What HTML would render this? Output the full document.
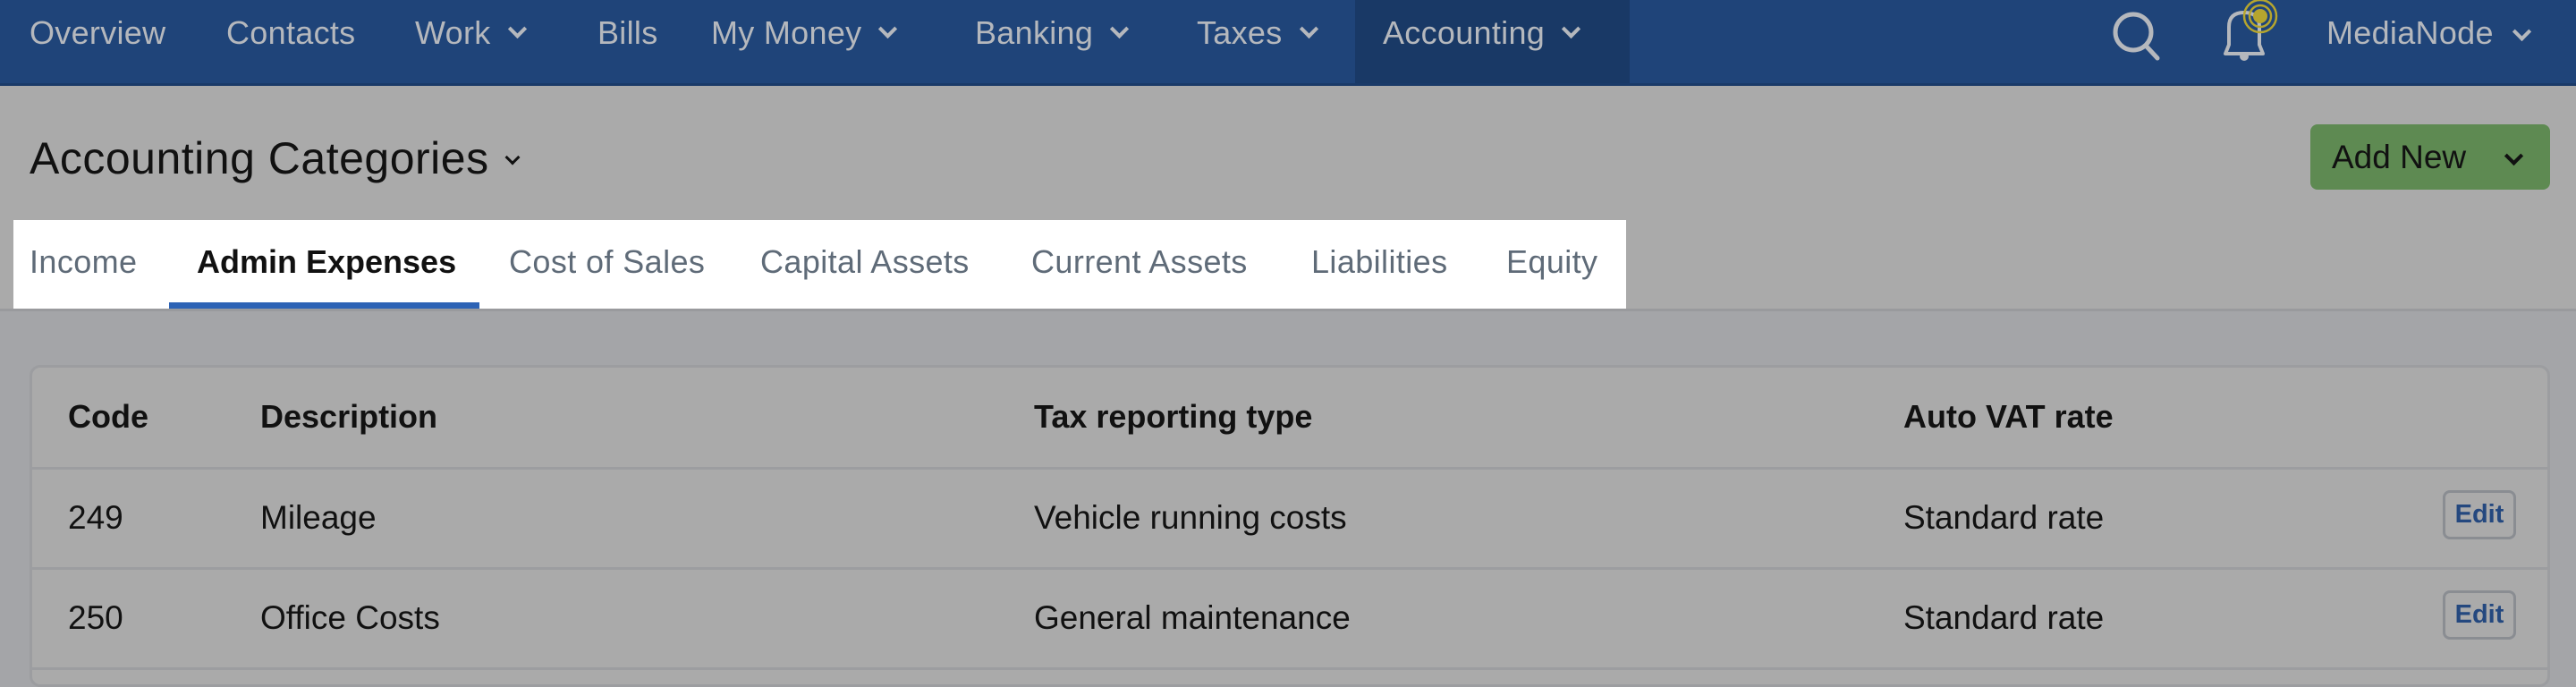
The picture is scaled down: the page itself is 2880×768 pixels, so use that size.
<!DOCTYPE html>
<html><head><meta charset="utf-8"><style>
*{margin:0;padding:0;box-sizing:border-box}
body{width:2880px;height:752px;overflow:hidden;background:#a4a5a8;font-family:"Liberation Sans",sans-serif;position:relative}
.nav{position:absolute;left:0;top:0;width:2880px;height:96px;background:#1f4479;border-bottom:3px solid #1a3a68}
.nav span{position:absolute;top:16px;font-size:36px;color:#b5b8bd;white-space:nowrap;letter-spacing:0.3px}
.act{position:absolute;left:1515px;top:0;width:307px;height:93px;background:#193966}
.chev{display:inline-block;width:15px;height:15px;border-right:4px solid #b5b8bd;border-bottom:4px solid #b5b8bd;transform:rotate(45deg);margin-left:22px;position:relative;top:-9px}
.top{position:absolute;left:0;top:96px;width:2880px;height:249px;background:#aaaaaa}
h1{position:absolute;left:33px;top:148px;font-size:50px;font-weight:normal;color:#111;white-space:nowrap;letter-spacing:0.5px}
.btn{position:absolute;left:2583px;top:139px;width:268px;height:73px;background:#5e8a52;border-radius:8px;font-size:37px;color:#111;padding:16px 0 0 24px;white-space:nowrap}
.tabs{position:absolute;left:15px;top:246px;width:1803px;height:99px;background:#fff}
.tabs span{position:absolute;top:26px;font-size:36px;color:#5f6b78;white-space:nowrap;letter-spacing:0.4px}
.line{position:absolute;left:0;top:345px;width:2880px;height:3px;background:#999a9d}
.card{position:absolute;left:33px;top:408px;width:2818px;height:360px;background:#aaa;border:3px solid #9c9da0;border-radius:12px}
.row{position:absolute;left:0;width:2812px;border-bottom:3px solid #9c9da0}
.row span{position:absolute;font-size:37px;color:#111;white-space:nowrap}
.edit{position:absolute;left:2695px;width:82px;height:55px;border:3px solid #8a8d92;border-radius:8px;color:#24487f;font-size:29px;text-align:center;line-height:49px;font-weight:bold}
</style></head><body>
<div class="nav">
<div class="act"></div>
<span style="left:33px">Overview</span>
<span style="left:253px">Contacts</span>
<span style="left:464px">Work<i class="chev"></i></span>
<span style="left:668px">Bills</span>
<span style="left:795px">My Money<i class="chev"></i></span>
<span style="left:1090px">Banking<i class="chev"></i></span>
<span style="left:1338px">Taxes<i class="chev"></i></span>
<span style="left:1546px">Accounting<i class="chev"></i></span>
<svg style="position:absolute;left:2360px;top:10px" width="64" height="64" viewBox="0 0 64 64"><circle cx="25" cy="26" r="20" fill="none" stroke="#b5b8bd" stroke-width="5"/><line x1="39" y1="41" x2="52" y2="55" stroke="#b5b8bd" stroke-width="5" stroke-linecap="round"/></svg>
<svg style="position:absolute;left:2460px;top:0px" width="100" height="70" viewBox="0 0 100 70"><path d="M28 60 L70 60 L66 50 L66 30 Q66 14 49 14 Q32 14 32 30 L32 50 Z" fill="none" stroke="#b5b8bd" stroke-width="4" stroke-linejoin="round"/><circle cx="49" cy="63" r="5" fill="#b5b8bd"/><circle cx="67" cy="18" r="18" fill="none" stroke="#b5a52e" stroke-width="2.5"/><circle cx="67" cy="18" r="12" fill="none" stroke="#b5a52e" stroke-width="2.5"/><circle cx="67" cy="18" r="8" fill="#b5a52e"/></svg>
<span style="left:2601px">MediaNode</span>
<i class="chev" style="position:absolute;left:2812px;top:28px;margin:0"></i>
</div>
<div class="top"></div>
<h1>Accounting Categories <i class="chev" style="width:12px;height:12px;border-color:#111;border-width:0 3px 3px 0;margin-left:6px;top:-12px"></i></h1>
<div class="btn">Add New <i class="chev" style="border-color:#111;margin-left:36px;top:-6px"></i></div>
<div class="tabs">
<span style="left:18px">Income</span>
<span style="left:205px;color:#111;font-weight:bold;letter-spacing:0">Admin Expenses</span>
<div style="position:absolute;left:174px;top:92px;width:347px;height:7px;background:#2d63b5"></div>
<span style="left:554px">Cost of Sales</span>
<span style="left:835px">Capital Assets</span>
<span style="left:1138px">Current Assets</span>
<span style="left:1451px">Liabilities</span>
<span style="left:1669px">Equity</span>
</div>
<div class="line"></div>
<div class="card">
<div class="row" style="top:0;height:114px"><span style="left:40px;top:34px;font-weight:bold;font-size:36px">Code</span><span style="left:255px;top:34px;font-weight:bold;font-size:36px">Description</span><span style="left:1120px;top:34px;font-weight:bold;font-size:36px">Tax reporting type</span><span style="left:2092px;top:34px;font-weight:bold;font-size:36px">Auto VAT rate</span></div>
<div class="row" style="top:114px;height:112px"><span style="left:40px;top:33px">249</span><span style="left:255px;top:33px">Mileage</span><span style="left:1120px;top:33px">Vehicle running costs</span><span style="left:2092px;top:33px">Standard rate</span><div class="edit" style="top:23px">Edit</div></div>
<div class="row" style="top:226px;height:112px"><span style="left:40px;top:33px">250</span><span style="left:255px;top:33px">Office Costs</span><span style="left:1120px;top:33px">General maintenance</span><span style="left:2092px;top:33px">Standard rate</span><div class="edit" style="top:23px">Edit</div></div>
</div>
</body></html>
